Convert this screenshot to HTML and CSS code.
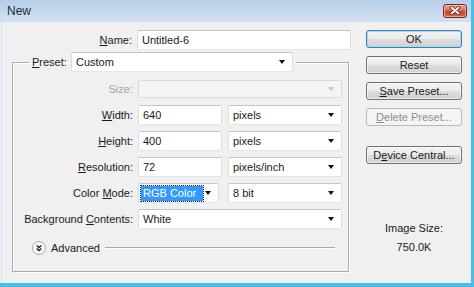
FILE: index.html
```html
<!DOCTYPE html>
<html>
<head>
<meta charset="utf-8">
<link rel="stylesheet" href="styles.css">
</head>
<body>
<div class="window">
  <div class="titlebar">
    <span class="title">New</span>
    <div class="close">
      <svg width="12" height="9" viewBox="0 0 12 9"><path d="M2.5 1.5 L9.5 7.5 M9.5 1.5 L2.5 7.5" stroke="#5a2019" stroke-width="3.4" stroke-linecap="round"/><path d="M2.5 1.5 L9.5 7.5 M9.5 1.5 L2.5 7.5" stroke="#fff" stroke-width="1.9" stroke-linecap="round"/></svg>
    </div>
  </div>
  <div class="client">
    <div class="form">
      <div class="row name-row">
        <label class="lbl"><u>N</u>ame:</label>
        <div class="field w214">Untitled-6</div>
      </div>
      <fieldset class="group">
        <legend class="legend">
          <span class="legend-lbl"><u>P</u>reset:</span>
          <div class="select w222"><span>Custom</span><i class="arrow"></i></div>
        </legend>
        <div class="row">
          <label class="lbl disabled">Size:</label>
          <div class="select disabled w204"><i class="arrow"></i></div>
        </div>
        <div class="row">
          <label class="lbl"><u>W</u>idth:</label>
          <div class="field w84">640</div>
          <div class="select w114 gap6"><span>pixels</span><i class="arrow"></i></div>
        </div>
        <div class="row">
          <label class="lbl"><u>H</u>eight:</label>
          <div class="field w84">400</div>
          <div class="select w114 gap6"><span>pixels</span><i class="arrow"></i></div>
        </div>
        <div class="row">
          <label class="lbl"><u>R</u>esolution:</label>
          <div class="field w84">72</div>
          <div class="select w114 gap6"><span>pixels/inch</span><i class="arrow"></i></div>
        </div>
        <div class="row">
          <label class="lbl">Color <u>M</u>ode:</label>
          <div class="select w81 focused"><span class="hl">RGB Color</span><i class="arrow"></i></div>
          <div class="select w114 gap9"><span>8 bit</span><i class="arrow"></i></div>
        </div>
        <div class="row">
          <label class="lbl">Background <u>C</u>ontents:</label>
          <div class="select w204"><span>White</span><i class="arrow"></i></div>
        </div>
        <div class="advanced">
          <span class="adv-icon">
            <svg width="14" height="14" viewBox="0 0 14 14"><circle cx="7" cy="7" r="6.5" fill="#f7f7f7" stroke="#a9a9a9"/><path d="M4.6 4.4 L7 6.6 L9.4 4.4 M4.6 7.4 L7 9.6 L9.4 7.4" fill="none" stroke="#222" stroke-width="1.3"/></svg>
          </span>
          <span class="adv-text">Advanced</span>
          <span class="adv-line"></span>
        </div>
      </fieldset>
    </div>
    <div class="side">
      <div class="btn default">OK</div>
      <div class="btn">Reset</div>
      <div class="btn"><u>S</u>ave Preset...</div>
      <div class="btn disabled"><u>D</u>elete Preset...</div>
      <div class="btn spaced">D<u>e</u>vice Central...</div>
      <div class="info">Image Size:</div>
      <div class="info value">750.0K</div>
    </div>
  </div>
</div>
</body>
</html>
```
FILE: styles.css
```css
* { box-sizing: border-box; }
html, body { margin: 0; padding: 0; }
body {
  width: 474px;
  height: 287px;
  overflow: hidden;
  background: #f0f0f0;
  font-family: "Liberation Sans", Arial, sans-serif;
  font-size: 11px;
  color: #1a1a1a;
}
u { text-decoration: underline; text-underline-offset: 1px; }

.window {
  width: 474px;
  height: 287px;
  display: flex;
  flex-direction: column;
  border-right: 3px solid #47bfe6;
  border-bottom: 4px solid #47bfe6;
}

.titlebar {
  height: 22px;
  flex: none;
  display: flex;
  align-items: center;
  padding-left: 7px;
  background: linear-gradient(#b7cee8, #c8dbef 60%, #d3e2f2);
}
.title {
  font-size: 12px;
  color: #1e2a3a;
  margin-top: 0px;
}
.close {
  margin-left: auto;
  margin-right: 4px;
  width: 24px;
  height: 14px;
  border: 1px solid #6e2b22;
  border-radius: 3px;
  background: linear-gradient(#eaa394, #d9705c 45%, #c5412c 55%, #d46a4f);
  box-shadow: inset 0 0 0 1px rgba(255,220,210,0.55);
  display: flex;
  align-items: center;
  justify-content: center;
  margin-top: -1px;
}

.client {
  flex: 1;
  display: flex;
  border-left: 3px solid #e3ebf4;
  padding-top: 8px;
  background: #f0f0f0;
}

.form {
  width: 348px;
  padding-left: 9px;
  flex: none;
}

.row {
  display: flex;
  align-items: center;
  height: 20px;
  margin-top: 6px;
}
.name-row { margin-top: 0; }

.lbl {
  width: 120px;
  flex: none;
  text-align: right;
  margin-right: 5px;
  white-space: nowrap;
}
.lbl.disabled { color: #a3a3a3; }

.field, .select {
  height: 20px;
  background: #fff;
  border: 1px solid;
  border-color: #c2c5c9 #dadde1 #e3e5e8 #dadde1;
  border-radius: 2px;
  display: flex;
  align-items: center;
  padding-left: 4px;
  flex: none;
  white-space: nowrap;
}
.select .arrow {
  margin-left: auto;
  margin-right: 7px;
  width: 0;
  height: 0;
  border-left: 3.5px solid transparent;
  border-right: 3.5px solid transparent;
  border-top: 4px solid #111;
}
.select.disabled {
  background: #f4f4f4;
  border-color: #d9d9d9;
  height: 18px;
}
.select.disabled .arrow { border-top-color: #c4c4c4; }

.w214 { width: 214px; }
.w222 { width: 222px; }
.w204 { width: 204px; }
.w84 { width: 84px; }
.w114 { width: 114px; }
.w81 { width: 81px; }
.gap6 { margin-left: 6px; }
.gap9 { margin-left: 9px; }

.select.focused { padding-left: 2px; }
.hl {
  background: #3399ff;
  color: #fff;
  outline: 1px dotted #222;
  height: 15px;
  line-height: 15px;
  width: 62px;
  padding-left: 2px;
}

.group {
  margin: 2px 0 0 0;
  width: 337px;
  padding: 1px 0 16px 0;
  border: 1px solid #acacac;
  box-shadow: 1px 1px 0 #fff, inset 1px 1px 0 #fff;
  min-width: 0;
}
.legend {
  display: flex;
  align-items: center;
  height: 20px;
  padding: 0 3px;
  margin-left: 16px;
}
.legend-lbl {
  width: 35px;
  margin-right: 4px;
  white-space: nowrap;
}

.advanced {
  display: flex;
  align-items: center;
  height: 14px;
  margin-top: 12px;
  padding-left: 19px;
  padding-right: 13px;
}
.adv-icon { width: 14px; height: 14px; display: flex; }
.adv-text { margin-left: 5px; }
.adv-line {
  flex: 1;
  height: 2px;
  margin-left: 5px;
  border-top: 1px solid #a6a6a6;
  border-bottom: 1px solid #fff;
}

.side {
  width: 96px;
  margin-left: 15px;
  flex: none;
  display: flex;
  flex-direction: column;
}
.btn {
  height: 18px;
  border: 1px solid #707070;
  border-radius: 3px;
  background: linear-gradient(#f3f3f3, #ebebeb 48%, #dddddd 52%, #d0d0d0);
  box-shadow: inset 0 0 0 1px rgba(255,255,255,0.6);
  display: flex;
  align-items: center;
  justify-content: center;
  white-space: nowrap;
  margin-top: 8px;
}
.btn.default {
  margin-top: 0;
  border-color: #3c7fb1;
  box-shadow: inset 0 0 0 1px #a6d7f4;
}
.btn.disabled {
  border-color: #b5b9bc;
  background: #f4f4f4;
  color: #8d8d8d;
  box-shadow: none;
}
.btn.spaced { margin-top: 20px; }

.info {
  text-align: center;
  margin-top: 58px;
  line-height: 13px;
}
.info.value { margin-top: 6px; }
```
